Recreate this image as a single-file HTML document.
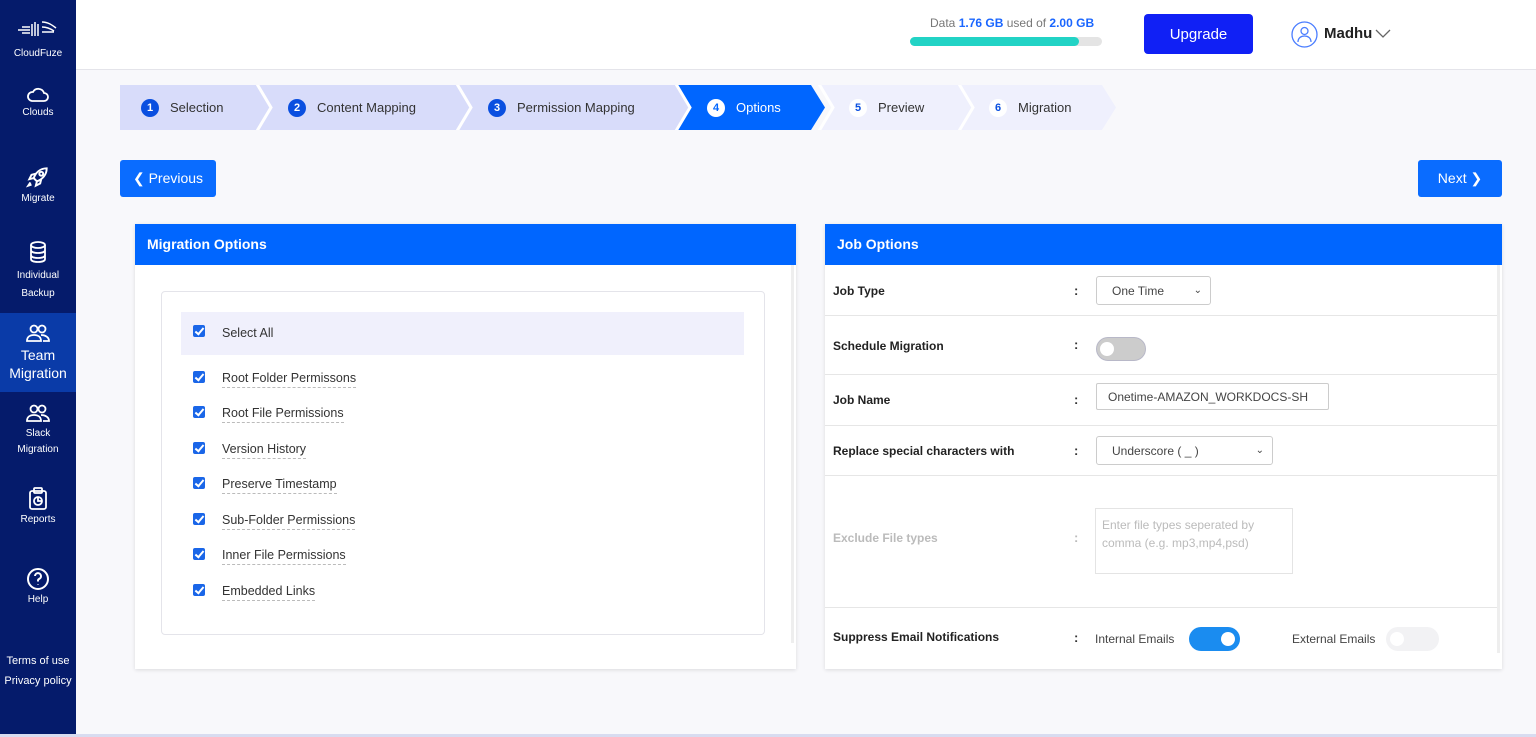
<!DOCTYPE html>
<html><head><meta charset="utf-8"><style>
*{box-sizing:border-box;margin:0;padding:0}
body{width:1536px;height:737px;overflow:hidden;background:#f8f8fb;font-family:"Liberation Sans",sans-serif;position:relative;color:#333}
.side{position:absolute;left:0;top:0;width:76px;height:737px;background:#051b6b;color:#fff;text-align:center;font-size:10px}
.it{position:absolute;left:0;width:76px}
.it svg{display:block;margin:0 auto 3px}
.hdr{position:absolute;left:76px;top:0;right:0;height:70px;background:#fff;border-bottom:1px solid #e4e4ea}
.step{position:absolute;top:85px;height:45px;clip-path:polygon(0 0,calc(100% - 14px) 0,100% 50%,calc(100% - 14px) 100%,0 100%,14px 50%);font-size:13px;color:#333;display:flex;align-items:center}
.step .n{width:18px;height:18px;border-radius:50%;background:#0a4fe0;color:#fff;font-size:11px;font-weight:bold;display:flex;align-items:center;justify-content:center;margin-right:11px}
.btn{position:absolute;top:160px;height:37px;background:#0a6cff;color:#fff;border-radius:3px;font-size:14px;display:flex;align-items:center;justify-content:center}
.panel{position:absolute;top:224px;background:#fff;box-shadow:0 1px 4px rgba(0,0,0,.12)}
.ph{height:41px;background:#0066ff;color:#fff;font-size:14px;font-weight:bold;padding:12px}
.cb{position:absolute;left:193px;width:12px;height:12px;background:#1a66e8;border-radius:2px}
.cb:after{content:"";position:absolute;left:4px;top:1px;width:3px;height:7px;border:solid #fff;border-width:0 2px 2px 0;transform:rotate(40deg)}
.lb{position:absolute;left:222px;font-size:12.5px;color:#333;border-bottom:1px dashed #bbb;padding-bottom:2px}
.row{position:absolute;left:825px;width:672px;border-top:1px solid #e6e6e6}
.rl{position:absolute;left:833px;font-size:12px;font-weight:bold;color:#222}
.col{position:absolute;left:1074px;font-size:13px;font-weight:bold}
.sel{position:absolute;left:1096px;border:1px solid #ccc;border-radius:3px;background:#fff;font-size:12px;color:#444;padding:0 0 0 15px;display:flex;align-items:center}
.tg{position:absolute;height:24px;width:51px;border-radius:12px}
.tg i{position:absolute;top:5px;width:14px;height:14px;border-radius:50%;background:#fff}
</style></head><body>
<div class="side">
 <div class="it" style="top:18px"><svg width="44" height="22" viewBox="0 0 44 22" fill="none" stroke="#fff" stroke-width="1.5"><path d="M2 12h12M6 9h8M6 15h8M16 6v12M19 4v14M22 6v12M26 4c6 0 10 3 14 6M26 9c5 0 9 2 12 4M26 14h12"/></svg><div style="margin-top:8px">CloudFuze</div></div>
 <div class="it" style="top:86px"><svg width="24" height="18" viewBox="0 0 24 18" fill="none" stroke="#fff" stroke-width="1.8"><path d="M6 15h12a4 4 0 0 0 0-8 6 6 0 0 0-11-1 4.5 4.5 0 0 0-1 9z"/></svg>Clouds</div>
 <div class="it" style="top:164px"><svg width="26" height="26" viewBox="0 0 24 24" fill="none" stroke="#fff" stroke-width="1.8"><path d="M20 4c-6 0-10 4-12 9l3 3c5-2 9-6 9-12zM8 13l-4 1 2-4 4-1M11 16l-1 4 4-2 1-4"/><circle cx="15" cy="9" r="1.8"/><path d="M5 17l-2 3 3-1"/></svg>Migrate</div>
 <div class="it" style="top:240px"><svg width="20" height="24" viewBox="0 0 20 24" fill="none" stroke="#fff" stroke-width="1.8"><ellipse cx="10" cy="5" rx="7" ry="3"/><path d="M3 5v14c0 2 3 3 7 3s7-1 7-3V5M3 10c0 2 3 3 7 3s7-1 7-3M3 15c0 2 3 3 7 3s7-1 7-3"/></svg><div style="line-height:18px">Individual<br>Backup</div></div>
 <div style="position:absolute;top:313px;left:0;width:76px;height:79px;background:#0a3ba8"></div>
 <div class="it" style="top:323px;font-size:14px;line-height:18px"><svg width="24" height="20" viewBox="0 0 24 20" fill="none" stroke="#fff" stroke-width="1.8"><circle cx="8" cy="6" r="3.5"/><circle cx="16" cy="6" r="3.5"/><path d="M1 18c0-4 3-6 7-6s7 2 7 6zM15 12c4 0 8 2 8 6h-6"/></svg>Team<br>Migration</div>
 <div class="it" style="top:403px;line-height:16px"><svg width="24" height="20" viewBox="0 0 24 20" fill="none" stroke="#fff" stroke-width="1.8"><circle cx="8" cy="6" r="3.5"/><circle cx="16" cy="6" r="3.5"/><path d="M1 18c0-4 3-6 7-6s7 2 7 6zM15 12c4 0 8 2 8 6h-6"/></svg>Slack<br>Migration</div>
 <div class="it" style="top:487px"><svg width="20" height="24" viewBox="0 0 20 24" fill="none" stroke="#fff" stroke-width="1.8"><rect x="2" y="4" width="16" height="18" rx="2"/><rect x="6" y="1" width="8" height="5" rx="1"/><circle cx="10" cy="14" r="4"/><path d="M10 10v4h4"/></svg>Reports</div>
 <div class="it" style="top:567px"><svg width="24" height="24" viewBox="0 0 24 24" fill="none" stroke="#fff" stroke-width="2"><circle cx="12" cy="12" r="10"/><path d="M9 9a3 3 0 1 1 4 3c-1 .5-1 1-1 2.5M12 17.5v.5"/></svg>Help</div>
 <div class="it" style="top:651px;font-size:11px;line-height:20px">Terms of use<br>Privacy policy</div>
</div>
<div class="hdr"></div>
<div style="position:absolute;left:930px;top:16px;font-size:12px;color:#777">Data <b style="color:#1a66ff">1.76 GB</b> used of <b style="color:#1a66ff">2.00 GB</b></div>
<div style="position:absolute;left:910px;top:37px;width:192px;height:9px;border-radius:5px;background:#e4e4e4"><div style="width:169px;height:9px;border-radius:5px;background:#22d3c5"></div></div>
<div style="position:absolute;left:1144px;top:14px;width:109px;height:40px;background:#1020f5;border-radius:4px;color:#fff;font-size:15px;display:flex;align-items:center;justify-content:center">Upgrade</div>
<svg style="position:absolute;left:1291px;top:21px" width="27" height="27" viewBox="0 0 27 27" fill="none" stroke="#4a7dff" stroke-width="1.3"><circle cx="13.5" cy="13.5" r="12.5"/><circle cx="13.5" cy="10" r="3.5"/><path d="M7 21c0-4 3-6 6.5-6s6.5 2 6.5 6"/></svg>
<div style="position:absolute;left:1324px;top:25px;font-size:15px;font-weight:bold;color:#222">Madhu</div>
<svg style="position:absolute;left:1375px;top:29px" width="16" height="10" viewBox="0 0 16 10" fill="none" stroke="#666" stroke-width="1.3"><path d="M1 1l7 7 7-7"/></svg>

<div class="step" style="left:120px;width:152px;background:#d8dcfa;clip-path:polygon(0 0,calc(100% - 14px) 0,100% 50%,calc(100% - 14px) 100%,0 100%);padding-left:21px"><span class="n">1</span>Selection</div>
<div class="step" style="left:258px;width:214px;background:#d8dcfa;padding-left:30px"><span class="n">2</span>Content Mapping</div>
<div class="step" style="left:458px;width:234px;background:#d8dcfa;padding-left:30px"><span class="n">3</span>Permission Mapping</div>
<div class="step" style="left:677px;width:148px;background:#0066ff;color:#fff;padding-left:30px"><span class="n" style="background:#fff;color:#0066ff">4</span>Options</div>
<div class="step" style="left:820px;width:154px;background:#eff0fd;padding-left:29px"><span class="n" style="background:#fff;color:#0a4fe0">5</span>Preview</div>
<div class="step" style="left:960px;width:156px;background:#eff0fd;padding-left:29px"><span class="n" style="background:#fff;color:#0a4fe0">6</span>Migration</div>
<svg style="position:absolute;left:0;top:85px" width="1200" height="45" fill="none" stroke="#fff" stroke-width="3"><path d="M257 -1L271 22.5 257 46M457 -1L471 22.5 457 46M676 -1L690 22.5 676 46M819 -1L833 22.5 819 46M959 -1L973 22.5 959 46"/></svg>

<div class="btn" style="left:120px;width:96px">&#10094;&nbsp;Previous</div>
<div class="btn" style="left:1418px;width:84px">Next&nbsp;&#10095;</div>

<div class="panel" style="left:135px;width:661px;height:445px"><div class="ph">Migration Options</div></div>
<div style="position:absolute;left:161px;top:291px;width:604px;height:344px;border:1px solid #e4e4ea;border-radius:4px;background:#fff"></div>
<div style="position:absolute;left:181px;top:312px;width:563px;height:43px;background:#f0f0fc"></div>
<div style="position:absolute;left:791px;top:265px;width:3px;height:378px;background:#eee"></div>
<div class="cb" style="top:325px"></div><div class="lb" style="top:326px;border:none">Select All</div>
<div class="cb" style="top:371px"></div><div class="lb" style="top:371px">Root Folder Permissons</div>
<div class="cb" style="top:406px"></div><div class="lb" style="top:406px">Root File Permissions</div>
<div class="cb" style="top:442px"></div><div class="lb" style="top:442px">Version History</div>
<div class="cb" style="top:477px"></div><div class="lb" style="top:477px">Preserve Timestamp</div>
<div class="cb" style="top:513px"></div><div class="lb" style="top:513px">Sub-Folder Permissions</div>
<div class="cb" style="top:548px"></div><div class="lb" style="top:548px">Inner File Permissions</div>
<div class="cb" style="top:584px"></div><div class="lb" style="top:584px">Embedded Links</div>

<div class="panel" style="left:825px;width:677px;height:445px"><div class="ph">Job Options</div></div>
<div style="position:absolute;left:1497px;top:265px;width:3px;height:388px;background:#eee"></div>
<div class="row" style="top:315px"></div><div class="row" style="top:374px"></div><div class="row" style="top:425px"></div><div class="row" style="top:475px"></div><div class="row" style="top:607px"></div>
<div class="rl" style="top:284px">Job Type</div><div class="col" style="top:283px">:</div>
<div class="sel" style="top:276px;width:115px;height:29px">One Time<span style="position:absolute;right:8px;font-size:10px">&#8964;</span></div>
<div class="rl" style="top:339px">Schedule Migration</div><div class="col" style="top:337px">:</div>
<div class="tg" style="left:1096px;top:337px;width:50px;background:#ccc;border:1px solid #b8b8c8"><i style="left:3px;top:4px"></i></div>
<div class="rl" style="top:393px">Job Name</div><div class="col" style="top:392px">:</div>
<div class="sel" style="top:383px;width:233px;height:27px;border-radius:2px;padding-left:11px;overflow:hidden;white-space:nowrap">Onetime-AMAZON_WORKDOCS-SH</div>
<div class="rl" style="top:444px">Replace special characters with</div><div class="col" style="top:443px">:</div>
<div class="sel" style="top:436px;width:177px;height:29px">Underscore ( _ )<span style="position:absolute;right:8px;font-size:10px">&#8964;</span></div>
<div class="rl" style="top:531px;color:#bbb">Exclude File types</div><div class="col" style="top:530px;color:#bbb">:</div>
<div style="position:absolute;left:1095px;top:508px;width:198px;height:66px;border:1px solid #e4e4e4;font-size:12px;color:#bbb;padding:7px 6px;line-height:18px">Enter file types seperated by comma (e.g. mp3,mp4,psd)</div>
<div class="rl" style="top:630px">Suppress Email Notifications</div><div class="col" style="top:630px">:</div>
<div style="position:absolute;left:1095px;top:632px;font-size:12px;color:#444">Internal Emails</div>
<div class="tg" style="left:1189px;top:627px;background:#1a8cf0"><i style="left:32px"></i></div>
<div style="position:absolute;left:1292px;top:632px;font-size:12px;color:#444">External Emails</div>
<div class="tg" style="left:1386px;top:627px;width:53px;background:#f2f2f4"><i style="left:4px"></i></div>
<div style="position:absolute;left:0;top:734px;width:1536px;height:3px;background:#d8dcf0"></div>
</body></html>
